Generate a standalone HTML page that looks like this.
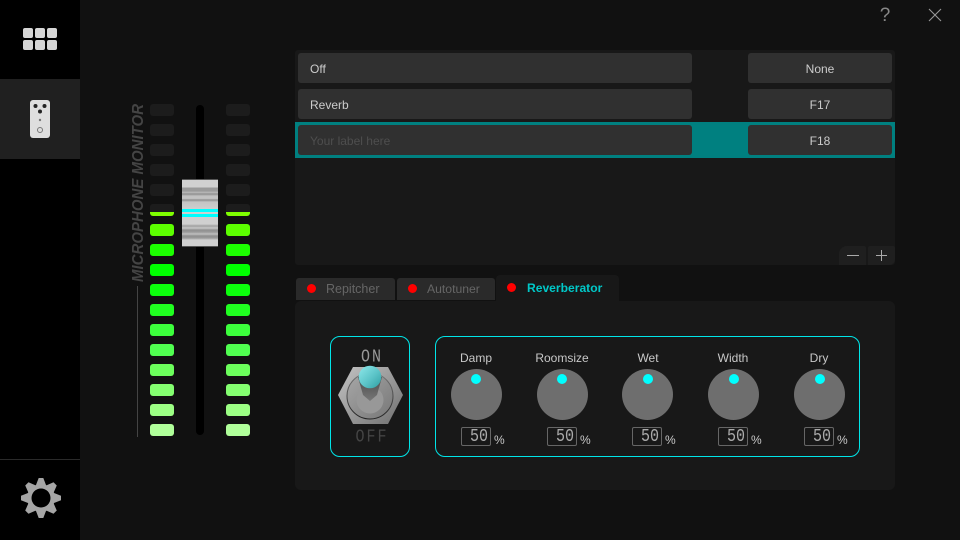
<!DOCTYPE html>
<html><head><meta charset="utf-8">
<style>
html,body{margin:0;padding:0;background:#111;}
#r{position:relative;width:960px;height:540px;overflow:hidden;background:#111;font-family:"Liberation Sans",sans-serif;}
#r div,#r span{position:absolute;box-sizing:border-box;}
.led{width:24px;height:12px;border-radius:3px;}
.l1{left:150px}.l2{left:226px}
.btn{background:#303030;border-radius:3px;color:#ccc;font-size:12px;height:30px;line-height:30px;padding-top:1px;}
.tab{background:#2a2a2a;height:22px;top:278px;border-radius:3px 3px 0 0;}
.dot{width:9px;height:9px;border-radius:50%;background:#f00;}
.lbl{font-size:12px;color:#c8c8c8;text-align:center;width:80px;top:351px;line-height:14px;}
.knob{width:51px;height:51px;top:369px;border-radius:50%;background:#6e6e6e;}
.kd{width:10px;height:10px;top:374px;border-radius:50%;background:#00ffff;}
.num{width:30px;height:19px;top:427px;border:1px solid #666;border-radius:2px;}
.num span{right:2px;top:0;color:#aaa;font:15px/17px "Liberation Mono",monospace;transform:scaleY(1.25);transform-origin:50% 50%;}
.pct{top:433px;font-size:12px;color:#c8c8c8;line-height:14px;}
.sw{left:345px;width:52px;text-align:center;font:15px/17px "Liberation Mono",monospace;letter-spacing:2px;text-indent:2px;transform:scaleY(1.2);}
</style></head><body><div id="r">
<div style="left:0;top:0;width:80px;height:540px;background:#000"></div>
<div style="left:0;top:79px;width:80px;height:80px;background:#202020"></div>
<div style="left:0;top:459px;width:80px;height:1px;background:#2a2a2a"></div>
<svg style="position:absolute;left:0;top:0" width="80" height="540">
<g fill="#d6d6d6"><rect x="23" y="28" width="10" height="10" rx="2"/><rect x="35" y="28" width="10" height="10" rx="2"/><rect x="47" y="28" width="10" height="10" rx="2"/><rect x="23" y="40" width="10" height="10" rx="2"/><rect x="35" y="40" width="10" height="10" rx="2"/><rect x="47" y="40" width="10" height="10" rx="2"/></g>
<rect x="30" y="100" width="20" height="38" rx="3" fill="#dedede"/>
<circle cx="35.500" cy="106" r="2" fill="#222"/><circle cx="44.500" cy="106" r="2" fill="#222"/><circle cx="40" cy="111.500" r="2" fill="#222"/><circle cx="40" cy="120" r="1.200" fill="#777"/><circle cx="40" cy="130" r="2.500" fill="none" stroke="#777" stroke-width="1"/>
<g transform="translate(41 498)" fill="#a6a6a6">
<circle r="14"/>
<path d="M-5 -13L-2.300 -20H2.300L5 -13Z"/>
<path d="M-5 -13L-2.300 -20H2.300L5 -13Z" transform="rotate(45)"/>
<path d="M-5 -13L-2.300 -20H2.300L5 -13Z" transform="rotate(90)"/>
<path d="M-5 -13L-2.300 -20H2.300L5 -13Z" transform="rotate(135)"/>
<path d="M-5 -13L-2.300 -20H2.300L5 -13Z" transform="rotate(180)"/>
<path d="M-5 -13L-2.300 -20H2.300L5 -13Z" transform="rotate(225)"/>
<path d="M-5 -13L-2.300 -20H2.300L5 -13Z" transform="rotate(270)"/>
<path d="M-5 -13L-2.300 -20H2.300L5 -13Z" transform="rotate(315)"/>
<circle r="9.500" fill="#000"/></g>
</svg>

<div style="left:135px;top:193px;width:0;height:0"><span style="left:-89px;top:-9px;width:178px;text-align:center;transform:rotate(-90deg) scaleY(1.05);font:italic bold 15px/18px 'Liberation Sans',sans-serif;color:#444;white-space:nowrap;margin-left:4px">MICROPHONE MONITOR</span></div>
<div style="left:137px;top:286px;width:1px;height:151px;background:#444"></div>

<div class="led l1" style="top:104px;background:#1c1c1c"></div><div class="led l2" style="top:104px;background:#1c1c1c"></div>
<div class="led l1" style="top:124px;background:#1c1c1c"></div><div class="led l2" style="top:124px;background:#1c1c1c"></div>
<div class="led l1" style="top:144px;background:#1c1c1c"></div><div class="led l2" style="top:144px;background:#1c1c1c"></div>
<div class="led l1" style="top:164px;background:#1c1c1c"></div><div class="led l2" style="top:164px;background:#1c1c1c"></div>
<div class="led l1" style="top:184px;background:#1c1c1c"></div><div class="led l2" style="top:184px;background:#1c1c1c"></div>
<div class="led l1" style="top:204px;background:linear-gradient(#1c1c1c 0,#1c1c1c 8px,#7fff00 8px)"></div><div class="led l2" style="top:204px;background:linear-gradient(#1c1c1c 0,#1c1c1c 8px,#7fff00 8px)"></div>
<div class="led l1" style="top:224px;background:#5cff00"></div><div class="led l2" style="top:224px;background:#5cff00"></div>
<div class="led l1" style="top:244px;background:#1cff00"></div><div class="led l2" style="top:244px;background:#1cff00"></div>
<div class="led l1" style="top:264px;background:#00ff00"></div><div class="led l2" style="top:264px;background:#00ff00"></div>
<div class="led l1" style="top:284px;background:#0cff0c"></div><div class="led l2" style="top:284px;background:#0cff0c"></div>
<div class="led l1" style="top:304px;background:#20ff20"></div><div class="led l2" style="top:304px;background:#20ff20"></div>
<div class="led l1" style="top:324px;background:#3cff3c"></div><div class="led l2" style="top:324px;background:#3cff3c"></div>
<div class="led l1" style="top:344px;background:#50ff50"></div><div class="led l2" style="top:344px;background:#50ff50"></div>
<div class="led l1" style="top:364px;background:#6cff5c"></div><div class="led l2" style="top:364px;background:#6cff5c"></div>
<div class="led l1" style="top:384px;background:#84ff70"></div><div class="led l2" style="top:384px;background:#84ff70"></div>
<div class="led l1" style="top:404px;background:#9cff84"></div><div class="led l2" style="top:404px;background:#9cff84"></div>
<div class="led l1" style="top:424px;background:#b0ff9a"></div><div class="led l2" style="top:424px;background:#b0ff9a"></div>

<div style="left:196px;top:105px;width:8px;height:330px;background:#000;border-radius:4px"></div>
<div style="left:182px;top:179px;width:36px;height:68px;border-top:1px solid #555;border-bottom:1px solid #555;background:linear-gradient(#d0d0d0 0,#d0d0d0 7px,#999 8px,#9a9a9a 11px,#bbb 12.500px,#8e8e8e 14px,#c0c0c0 16px,#c4c4c4 18.500px,#8e8e8e 20px,#c4c4c4 22px,#cecece 29px,#00ffff 29px,#00ffff 32px,#d0d0d0 32px,#d0d0d0 34px,#00ffff 34px,#00ffff 37px,#d0d0d0 37px,#d0d0d0 44px,#a0a0a0 46px,#c8c8c8 48px,#909090 50px,#999 52px,#c0c0c0 54px,#8e8e8e 56px,#999 58px,#d0d0d0 60px,#d0d0d0 100%)"></div>

<div style="left:295px;top:50px;width:600px;height:215px;background:#181818;border-radius:3px"></div>
<div style="left:295px;top:122px;width:600px;height:36px;background:#008080"></div>
<div class="btn" style="left:298px;top:53px;width:394px;padding-left:12px">Off</div>
<div class="btn" style="left:298px;top:89px;width:394px;padding-left:12px">Reverb</div>
<div class="btn" style="left:298px;top:125px;width:394px;padding-left:12px;color:#4e4e4e">Your label here</div>
<div class="btn" style="left:748px;top:53px;width:144px;text-align:center">None</div>
<div class="btn" style="left:748px;top:89px;width:144px;text-align:center">F17</div>
<div class="btn" style="left:748px;top:125px;width:144px;text-align:center">F18</div>

<div style="left:839px;top:246px;width:27px;height:19px;background:#1f1f1f;border-radius:8px 2px 0 0"></div>
<div style="left:868px;top:246px;width:27px;height:19px;background:#1f1f1f;border-radius:2px 2px 6px 0"></div>
<div style="left:847px;top:255px;width:12px;height:1px;background:#aaa"></div>
<div style="left:876px;top:255px;width:11px;height:1px;background:#aaa"></div>
<div style="left:881px;top:250px;width:1px;height:11px;background:#aaa"></div>

<div style="left:295px;top:301px;width:600px;height:189px;background:#181818;border-radius:6px"></div>
<div class="tab" style="left:296px;width:99px"></div>
<div class="tab" style="left:397px;width:98px"></div>
<div style="left:496px;top:275px;width:123px;height:30px;background:#181818;border-radius:4px 4px 0 0"></div>
<div class="dot" style="left:306.500px;top:284px"></div>
<div class="dot" style="left:407.500px;top:284px"></div>
<div class="dot" style="left:507px;top:283px"></div>
<span style="left:326px;top:282px;font-size:12.500px;line-height:15px;color:#666;white-space:nowrap">Repitcher</span>
<span style="left:427px;top:282px;font-size:12.200px;line-height:15px;color:#666;white-space:nowrap">Autotuner</span>
<span style="left:527px;top:281px;font-size:12.100px;font-weight:bold;line-height:15px;color:#00c8c8;white-space:nowrap">Reverberator</span>

<div style="left:330px;top:336px;width:80px;height:121px;border:1px solid #00e5e8;border-radius:10px"></div>
<span class="sw" style="top:349px;color:#999">ON</span>
<span class="sw" style="top:429px;color:#444">OFF</span>
<svg style="position:absolute;left:330px;top:360px" width="80" height="70">
<defs>
<linearGradient id="h" x1="0" y1="0" x2="1" y2="1"><stop offset="0" stop-color="#c4c4c4"/><stop offset="1" stop-color="#707070"/></linearGradient>
<linearGradient id="b" x1="0" y1="0" x2="1" y2="1"><stop offset="0" stop-color="#a8a8a8"/><stop offset="1" stop-color="#777"/></linearGradient>
<linearGradient id="st" x1="0" y1="0" x2="0" y2="1"><stop offset="0" stop-color="#777"/><stop offset="1" stop-color="#222"/></linearGradient>
<linearGradient id="t" x1="0" y1="0" x2="1" y2="1"><stop offset="0" stop-color="#8ee8ea"/><stop offset=".55" stop-color="#5cc4c8"/><stop offset="1" stop-color="#2f9ea2"/></linearGradient>
<linearGradient id="s" x1="0" y1="0" x2="0" y2="1"><stop offset="0" stop-color="#4a4a4a"/><stop offset="1" stop-color="#777"/></linearGradient>
</defs>
<path d="M8 35L23 7H58L73 35 58 64H23Z" fill="url(#h)"/>
<circle cx="40" cy="36" r="23" fill="url(#b)" stroke="url(#st)" stroke-width="1"/>
<circle cx="40" cy="40" r="13.500" fill="#989898"/>
<path d="M28 17H52L47 35 40 41 33 35Z" fill="url(#s)"/>
<circle cx="40" cy="17" r="11.300" fill="url(#t)"/>
</svg>

<div style="left:435px;top:336px;width:425px;height:121px;border:1px solid #00e5e8;border-radius:10px"></div>

<div class="lbl" style="left:436px">Damp</div><div class="knob" style="left:451px"></div><div class="kd" style="left:471px"></div><div class="num" style="left:461px"><span>50</span></div><span class="pct" style="left:494px">%</span>
<div class="lbl" style="left:522px">Roomsize</div><div class="knob" style="left:537px"></div><div class="kd" style="left:557px"></div><div class="num" style="left:547px"><span>50</span></div><span class="pct" style="left:580px">%</span>
<div class="lbl" style="left:608px">Wet</div><div class="knob" style="left:622px"></div><div class="kd" style="left:643px"></div><div class="num" style="left:632px"><span>50</span></div><span class="pct" style="left:665px">%</span>
<div class="lbl" style="left:693px">Width</div><div class="knob" style="left:708px"></div><div class="kd" style="left:729px"></div><div class="num" style="left:718px"><span>50</span></div><span class="pct" style="left:751px">%</span>
<div class="lbl" style="left:779px">Dry</div><div class="knob" style="left:794px"></div><div class="kd" style="left:815px"></div><div class="num" style="left:804px"><span>50</span></div><span class="pct" style="left:837px">%</span>

<span style="left:878px;top:5px;width:14px;text-align:center;font-size:19px;line-height:21px;color:#888">?</span>
<svg style="position:absolute;left:925px;top:5px" width="20" height="20"><path d="M4 4L16 16M16 4L4 16" stroke="#999" stroke-width="1.100" fill="none"/></svg>
</div></body></html>
